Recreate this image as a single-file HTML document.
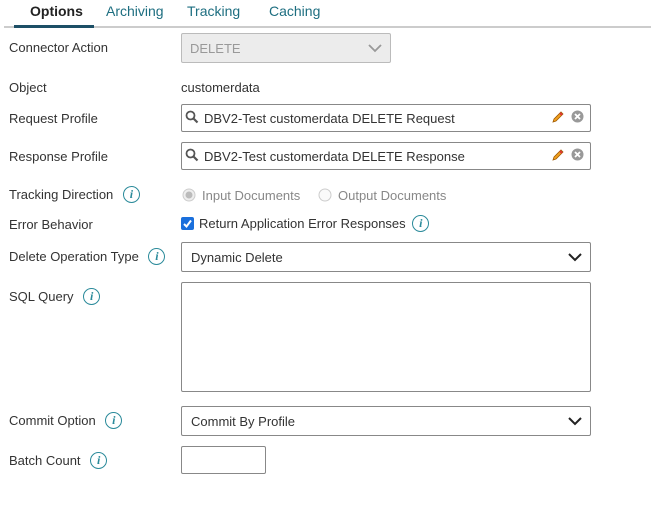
<!DOCTYPE html>
<html><head><style>
body{margin:0;width:651px;height:523px;background:#fff;font-family:"Liberation Sans",sans-serif;font-size:13px;color:#333;position:relative;overflow:hidden}
.a{position:absolute}
.tab{position:absolute;top:3px;font-size:14px;color:#1d6e80}
.lbl{position:absolute;left:9px;line-height:16px}
.box{position:absolute;border:1px solid #888;border-radius:2px;box-sizing:border-box;background:#fff}
.info{display:inline-block;width:15px;height:15px;border:1.3px solid #2a8a9a;border-radius:50%;color:#2a8a9a;font:italic bold 12px "Liberation Serif",serif;text-align:center;line-height:15px;vertical-align:-2px;position:relative;top:-3px}
.chev{position:absolute;right:8px;top:8px}
</style></head><body>
<div class="tab" style="left:30px;color:#222;font-weight:bold">Options</div>
<div class="tab" style="left:106px">Archiving</div>
<div class="tab" style="left:187px">Tracking</div>
<div class="tab" style="left:269px">Caching</div>
<div class="a" style="left:4px;top:26px;width:647px;height:2px;background:#ccc"></div>
<div class="a" style="left:14px;top:25px;width:80px;height:3px;background:#1d4f66"></div>

<div class="lbl" style="top:40px">Connector Action</div>
<div class="box" style="left:181px;top:33px;width:210px;height:30px;background:#ececec;border-color:#bbb;color:#999;padding:7px 8px">DELETE
<svg class="chev" style="top:10px" width="14" height="9"><path d="M1 1l6 6 6-6" stroke="#999" stroke-width="1.8" fill="none"/></svg></div>

<div class="lbl" style="top:80px">Object</div>
<div class="a" style="left:181px;top:80px">customerdata</div>

<div class="lbl" style="top:111px">Request Profile</div>
<div class="box" style="left:181px;top:104px;width:410px;height:28px;padding:6px 0 0 22px">DBV2-Test customerdata DELETE Request</div>
<div class="lbl" style="top:149px">Response Profile</div>
<div class="box" style="left:181px;top:142px;width:410px;height:28px;padding:6px 0 0 22px">DBV2-Test customerdata DELETE Response</div>
<svg class="a" style="left:185px;top:110px" width="14" height="14"><circle cx="5.5" cy="5.5" r="4" stroke="#555" stroke-width="1.8" fill="none"/><path d="M8.5 8.5l4 4" stroke="#555" stroke-width="2.2"/></svg>
<svg class="a" style="left:185px;top:148px" width="14" height="14"><circle cx="5.5" cy="5.5" r="4" stroke="#555" stroke-width="1.8" fill="none"/><path d="M8.5 8.5l4 4" stroke="#555" stroke-width="2.2"/></svg>
<svg class="a" style="left:552px;top:111px" width="12" height="12"><path d="M1 11l1-3 7-7 2 2-7 7z" fill="#f0a020" stroke="#a05a00" stroke-width=".8"/><path d="M8 2l2 2" stroke="#d33" stroke-width="2"/></svg>
<svg class="a" style="left:552px;top:149px" width="12" height="12"><path d="M1 11l1-3 7-7 2 2-7 7z" fill="#f0a020" stroke="#a05a00" stroke-width=".8"/><path d="M8 2l2 2" stroke="#d33" stroke-width="2"/></svg>
<svg class="a" style="left:571px;top:110px" width="13" height="13"><circle cx="6.5" cy="6.5" r="6" fill="#999"/><path d="M4 4l5 5M9 4l-5 5" stroke="#fff" stroke-width="1.8"/></svg>
<svg class="a" style="left:571px;top:148px" width="13" height="13"><circle cx="6.5" cy="6.5" r="6" fill="#999"/><path d="M4 4l5 5M9 4l-5 5" stroke="#fff" stroke-width="1.8"/></svg>

<div class="lbl" style="top:187px">Tracking Direction <span class="info" style="margin-left:6px">i</span></div>
<svg class="a" style="left:182px;top:188px" width="14" height="14"><circle cx="7" cy="7" r="6" fill="#eee" stroke="#ccc"/><circle cx="7" cy="7" r="3.5" fill="#bbb"/></svg>
<div class="a" style="left:202px;top:188px;color:#888">Input Documents</div>
<svg class="a" style="left:318px;top:188px" width="14" height="14"><circle cx="7" cy="7" r="6" fill="#fafafa" stroke="#ccc"/></svg>
<div class="a" style="left:338px;top:188px;color:#888">Output Documents</div>

<div class="lbl" style="top:217px">Error Behavior</div>
<svg class="a" style="left:181px;top:217px" width="13" height="13"><rect width="13" height="13" rx="2" fill="#1a6fdc"/><path d="M3 7l2.5 2.5L10 3.5" stroke="#fff" stroke-width="2" fill="none"/></svg>
<div class="a" style="left:199px;top:216px">Return Application Error Responses <span class="info" style="margin-left:3px">i</span></div>

<div class="lbl" style="top:249px">Delete Operation Type <span class="info" style="margin-left:6px">i</span></div>
<div class="box" style="left:181px;top:242px;width:410px;height:30px;padding:7px 9px">Dynamic Delete
<svg class="chev" style="top:10px" width="14" height="9"><path d="M1 1l6 6 6-6" stroke="#222" stroke-width="2" fill="none"/></svg></div>

<div class="lbl" style="top:289px">SQL Query <span class="info" style="margin-left:6px">i</span></div>
<div class="box" style="left:181px;top:282px;width:410px;height:110px"></div>

<div class="lbl" style="top:413px">Commit Option <span class="info" style="margin-left:6px">i</span></div>
<div class="box" style="left:181px;top:406px;width:410px;height:30px;padding:7px 9px">Commit By Profile
<svg class="chev" style="top:10px" width="14" height="9"><path d="M1 1l6 6 6-6" stroke="#222" stroke-width="2" fill="none"/></svg></div>

<div class="lbl" style="top:453px">Batch Count <span class="info" style="margin-left:6px">i</span></div>
<div class="box" style="left:181px;top:446px;width:85px;height:28px"></div>
</body></html>
